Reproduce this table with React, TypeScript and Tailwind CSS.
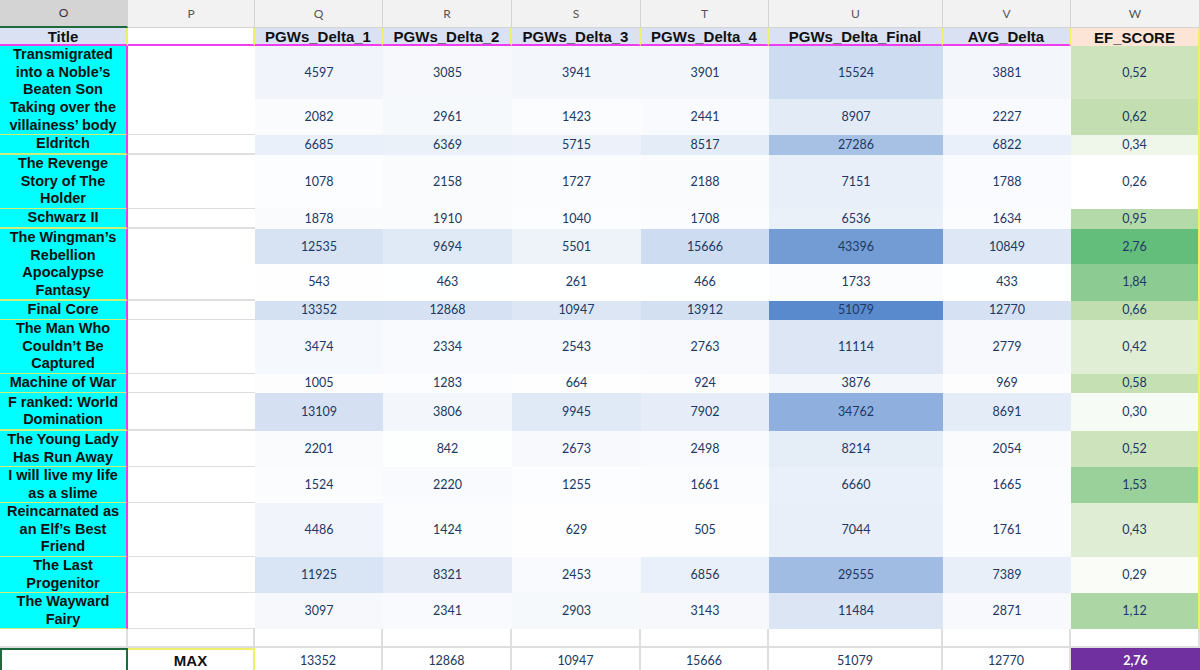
import React from 'react';

const COLS = 'grid grid-cols-[128px_127px_128px_129px_129px_128px_174px_128px_129px]';

const letters = ['O', 'P', 'Q', 'R', 'S', 'T', 'U', 'V', 'W'];
const headers = ['PGWs_Delta_1', 'PGWs_Delta_2', 'PGWs_Delta_3', 'PGWs_Delta_4', 'PGWs_Delta_Final', 'AVG_Delta'];

const rows = [
  { title: ['Transmigrated', 'into a Noble’s', 'Beaten Son'], h: 'h-[53px]', values: [4597, 3085, 3941, 3901, 15524, 3881], ef: 0.52 },
  { title: ['Taking over the', 'villainess’ body'], h: 'h-[36px]', values: [2082, 2961, 1423, 2441, 8907, 2227], ef: 0.62 },
  { title: ['Eldritch'], h: 'h-[20px]', values: [6685, 6369, 5715, 8517, 27286, 6822], ef: 0.34 },
  { title: ['The Revenge', 'Story of The', 'Holder'], h: 'h-[54px]', values: [1078, 2158, 1727, 2188, 7151, 1788], ef: 0.26 },
  { title: ['Schwarz II'], h: 'h-[20px]', values: [1878, 1910, 1040, 1708, 6536, 1634], ef: 0.95 },
  { title: ['The Wingman’s', 'Rebellion'], h: 'h-[35px]', values: [12535, 9694, 5501, 15666, 43396, 10849], ef: 2.76 },
  { title: ['Apocalypse', 'Fantasy'], h: 'h-[37px]', values: [543, 463, 261, 466, 1733, 433], ef: 1.84 },
  { title: ['Final Core'], h: 'h-[19px]', values: [13352, 12868, 10947, 13912, 51079, 12770], ef: 0.66 },
  { title: ['The Man Who', 'Couldn’t Be', 'Captured'], h: 'h-[54px]', values: [3474, 2334, 2543, 2763, 11114, 2779], ef: 0.42 },
  { title: ['Machine of War'], h: 'h-[19px]', values: [1005, 1283, 664, 924, 3876, 969], ef: 0.58 },
  { title: ['F ranked: World', 'Domination'], h: 'h-[38px]', values: [13109, 3806, 9945, 7902, 34762, 8691], ef: 0.3 },
  { title: ['The Young Lady', 'Has Run Away'], h: 'h-[36px]', values: [2201, 842, 2673, 2498, 8214, 2054], ef: 0.52 },
  { title: ['I will live my life', 'as a slime'], h: 'h-[36px]', values: [1524, 2220, 1255, 1661, 6660, 1665], ef: 1.53 },
  { title: ['Reincarnated as', 'an Elf’s Best', 'Friend'], h: 'h-[54px]', values: [4486, 1424, 629, 505, 7044, 1761], ef: 0.43 },
  { title: ['The Last', 'Progenitor'], h: 'h-[36px]', values: [11925, 8321, 2453, 6856, 29555, 7389], ef: 0.29 },
  { title: ['The Wayward', 'Fairy'], h: 'h-[36px]', values: [3097, 2341, 2903, 3143, 11484, 2871], ef: 1.12 },
];

const maxValues = [13352, 12868, 10947, 15666, 51079, 12770];

const mix = (a: number[], b: number[], t: number) => {
  const k = Math.max(0, Math.min(1, t));
  return `rgb(${a.map((c, i) => Math.round(c + (b[i] - c) * k)).join(',')})`;
};

// blue scale over all delta cells, white -> excel blue
const blue = (v: number) => mix([255, 255, 255], [90, 138, 206], (v - 261) / (51079 - 261));

// 3-colour scale for EF_SCORE
const green = (v: number) =>
  v <= 0.55
    ? mix([255, 255, 255], [198, 224, 180], (v - 0.26) / (0.55 - 0.26))
    : mix([198, 224, 180], [99, 190, 123], (v - 0.55) / (2.76 - 0.55));

const fmt = (v: number) => v.toFixed(2).replace('.', ',');

export default function App() {
  return (
    <div className="w-[1200px] h-[670px] overflow-hidden bg-white font-['Lato',sans-serif]">
      {/* column letters */}
      <div className={`${COLS} h-[28px]`}>
        {letters.map((l, i) => (
          <div
            key={l}
            className={`flex items-center justify-center text-[12px] border-r border-[#d4d4d4] ${
              i === 0 ? 'bg-[#d4d4d4] text-[#333] border-b-2 border-b-[#1d6b3c]' : 'bg-[#f2f2f2] text-[#555] border-b border-b-[#d4d4d4]'
            }`}
          >
            {l}
          </div>
        ))}
      </div>

      {/* header row */}
      <div className={`${COLS} h-[18px] font-['Liberation_Sans',Arial,sans-serif] font-bold text-[15px] leading-none text-[#111]`}>
        <div className="flex items-center justify-center bg-[#d9e1f2] border-r-2 border-r-[#eef06a] border-b-2 border-b-[#ee3cee]">Title</div>
        <div className="bg-white border-r-2 border-r-[#eef06a] border-b-2 border-b-[#ee3cee]" />
        {headers.map((h) => (
          <div key={h} className="flex items-center justify-center bg-[#d9e1f2] border-r-2 border-r-[#eef06a] border-b-2 border-b-[#ee3cee]">
            {h}
          </div>
        ))}
        <div className="flex items-center justify-center bg-[#fce4d6] border-r-2 border-r-[#eef06a]">EF_SCORE</div>
      </div>

      {/* data rows */}
      {rows.map((r) => (
        <div key={r.title.join(' ')} className={`${COLS} ${r.h}`}>
          <div className="flex flex-col items-center justify-center bg-[#00ffff] border-r-2 border-r-[#ee3cee] border-b-2 border-b-[#cfee78] font-['Liberation_Sans',Arial,sans-serif] font-bold text-[14.5px] leading-[17.5px] text-[#111] text-center">
            {r.title.map((t) => (
              <span key={t} className="whitespace-nowrap">{t}</span>
            ))}
          </div>
          <div className="bg-white border-b-2 border-b-[#dedede]" />
          {r.values.map((v, i) => (
            <div
              key={i}
              className="flex items-center justify-center text-[12.5px] text-[#203864]"
              style={{ backgroundColor: blue(v) }}
            >
              {v}
            </div>
          ))}
          <div
            className="flex items-center justify-center text-[12.5px] text-[#203864] border-r-2 border-r-[#eef06a]"
            style={{ backgroundColor: green(r.ef) }}
          >
            {fmt(r.ef)}
          </div>
        </div>
      ))}

      {/* empty row */}
      <div className={`${COLS} h-[19px]`}>
        {letters.map((l) => (
          <div key={l} className="bg-white border-r-2 border-b-2 border-[#dedede]" />
        ))}
      </div>

      {/* MAX row */}
      <div className={`${COLS} h-[22px]`}>
        <div className="relative border-2 border-[#1d6b3c]">
          <span className="absolute -right-[4px] -bottom-[4px] w-[6px] h-[6px] bg-[#1d6b3c] border border-white" />
        </div>
        <div className="flex items-center justify-center border-t-2 border-t-[#eef06a] border-r-2 border-r-[#eef06a] border-b-2 border-b-[#ee3cee] font-['Liberation_Sans',Arial,sans-serif] font-bold text-[15px] text-[#111]">
          MAX
        </div>
        {maxValues.map((v, i) => (
          <div key={i} className="flex items-center justify-center bg-white border-r-2 border-[#dedede] text-[12.5px] text-[#203864]">
            {v}
          </div>
        ))}
        <div className="flex items-center justify-center bg-[#7030a0] text-white font-bold text-[12.5px]">2,76</div>
      </div>
    </div>
  );
}
